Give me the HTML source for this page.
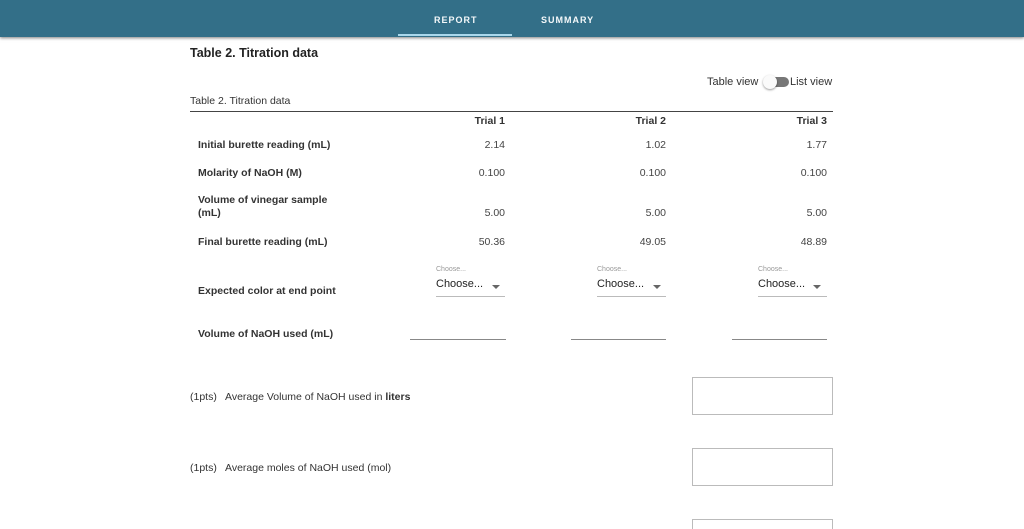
<!DOCTYPE html>
<html><head><style>
html,body{margin:0;width:1024px;height:529px;overflow:hidden}
body{background:#fff;font-family:"Liberation Sans",sans-serif;color:#222;position:relative}
.a{position:absolute;white-space:nowrap}
.hdr{position:absolute;left:0;top:0;width:1024px;height:37px;background:#336f88;box-shadow:0 1px 3px rgba(0,0,0,.5)}
.tab{position:absolute;top:15px;color:#f4f8fa;font-size:9px;letter-spacing:1px;font-weight:bold}
.lbl{font-size:10.5px;font-weight:bold;color:#333}
.v{font-size:10.5px;color:#444;text-align:right;width:60px}
.th{font-size:10.5px;font-weight:bold;text-align:right;width:60px;color:#333}
.ln{position:absolute;height:1px;background:#888}
.box{position:absolute;border:1px solid #bbb;width:139px;height:36px}
</style></head><body>
<div class="hdr">
<div class="tab" style="left:434px">REPORT</div>
<div class="tab" style="left:541px">SUMMARY</div>
<div style="position:absolute;left:398px;top:34px;width:114px;height:2px;background:#a9d8ec"></div>
</div>
<div class="a" style="left:190px;top:46px;font-size:12.5px;font-weight:bold">Table 2. Titration data</div>
<div class="a" style="left:707px;top:76px;font-size:11px;color:#333">Table view</div>
<div style="position:absolute;left:767px;top:77px;width:22px;height:10px;border-radius:5px;background:#777"></div>
<div style="position:absolute;left:763px;top:75px;width:14px;height:14px;border-radius:50%;background:#fafafa;box-shadow:0 1px 2px rgba(0,0,0,.4)"></div>
<div class="a" style="left:790px;top:76px;font-size:11px;color:#333">List view</div>
<div class="a" style="left:190px;top:95px;font-size:10.5px;color:#333">Table 2. Titration data</div>
<div class="ln" style="left:190px;top:111px;width:643px;background:#444"></div>
<div class="a th" style="left:445px;top:115px">Trial 1</div>
<div class="a th" style="left:606px;top:115px">Trial 2</div>
<div class="a th" style="left:767px;top:115px">Trial 3</div>
<div class="a lbl" style="left:198px;top:139px">Initial burette reading (mL)</div>
<div class="a v" style="left:445px;top:139px">2.14</div><div class="a v" style="left:606px;top:139px">1.02</div><div class="a v" style="left:767px;top:139px">1.77</div>
<div class="a lbl" style="left:198px;top:167px">Molarity of NaOH (M)</div>
<div class="a v" style="left:445px;top:167px">0.100</div><div class="a v" style="left:606px;top:167px">0.100</div><div class="a v" style="left:767px;top:167px">0.100</div>
<div class="a lbl" style="left:198px;top:194px;line-height:13px">Volume of vinegar sample<br>(mL)</div>
<div class="a v" style="left:445px;top:207px">5.00</div><div class="a v" style="left:606px;top:207px">5.00</div><div class="a v" style="left:767px;top:207px">5.00</div>
<div class="a lbl" style="left:198px;top:236px">Final burette reading (mL)</div>
<div class="a v" style="left:445px;top:236px">50.36</div><div class="a v" style="left:606px;top:236px">49.05</div><div class="a v" style="left:767px;top:236px">48.89</div>
<div class="a lbl" style="left:198px;top:285px">Expected color at end point</div>
<div class="a lbl" style="left:198px;top:328px">Volume of NaOH used (mL)</div>
<div class="a" style="left:436px;top:266px;font-size:7px;color:#999">Choose...</div>
<div class="a" style="left:436px;top:278px;font-size:11px;color:#222">Choose...</div>
<div class="a" style="left:492px;top:285px;width:0;height:0;border-left:4px solid transparent;border-right:4px solid transparent;border-top:4px solid #666"></div>
<div class="ln" style="left:436px;top:296px;width:69px;background:#bbb"></div>
<div class="a" style="left:597px;top:266px;font-size:7px;color:#999">Choose...</div>
<div class="a" style="left:597px;top:278px;font-size:11px;color:#222">Choose...</div>
<div class="a" style="left:653px;top:285px;width:0;height:0;border-left:4px solid transparent;border-right:4px solid transparent;border-top:4px solid #666"></div>
<div class="ln" style="left:597px;top:296px;width:69px;background:#bbb"></div>
<div class="a" style="left:758px;top:266px;font-size:7px;color:#999">Choose...</div>
<div class="a" style="left:758px;top:278px;font-size:11px;color:#222">Choose...</div>
<div class="a" style="left:813px;top:285px;width:0;height:0;border-left:4px solid transparent;border-right:4px solid transparent;border-top:4px solid #666"></div>
<div class="ln" style="left:758px;top:296px;width:69px;background:#bbb"></div>
<div class="ln" style="left:410px;top:339px;width:96px"></div>
<div class="ln" style="left:571px;top:339px;width:95px"></div>
<div class="ln" style="left:732px;top:339px;width:95px"></div>
<div class="a" style="left:190px;top:391px;font-size:10.5px;color:#333">(1pts)&nbsp;&nbsp; Average Volume of NaOH used in <b>liters</b></div>
<div class="box" style="left:692px;top:377px"></div>
<div class="a" style="left:190px;top:462px;font-size:10.5px;color:#333">(1pts)&nbsp;&nbsp; Average moles of NaOH used (mol)</div>
<div class="box" style="left:692px;top:448px"></div>
<div class="box" style="left:692px;top:519px;height:9px;border-bottom:none"></div>
</body></html>
